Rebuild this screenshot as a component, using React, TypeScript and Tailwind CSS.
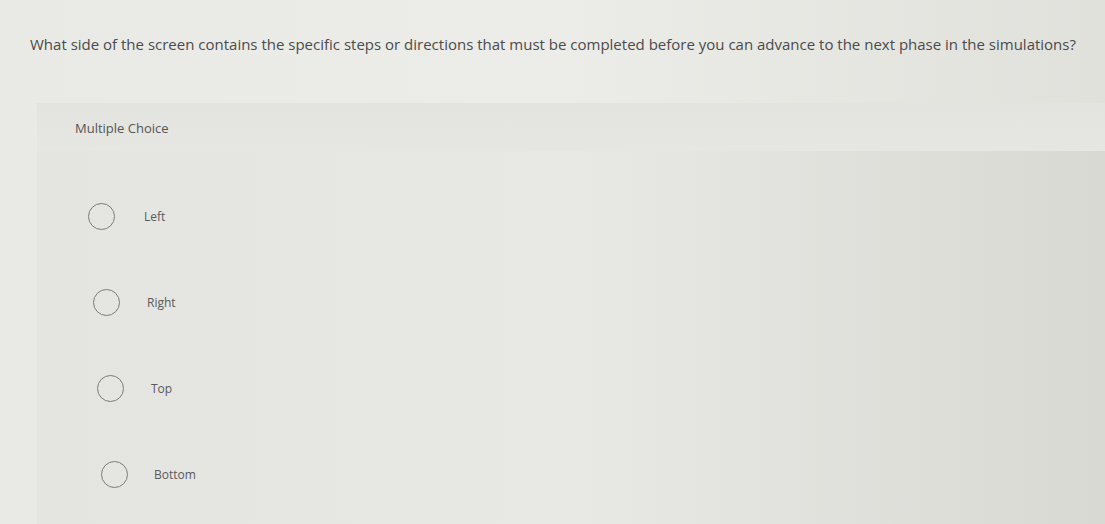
import React from "react";

const options = [
  { label: "Left", ml: "ml-[51px]", gap: "gap-[29px]" },
  { label: "Right", ml: "ml-[56px]", gap: "gap-[27px]" },
  { label: "Top", ml: "ml-[60px]", gap: "gap-[27px]" },
  { label: "Bottom", ml: "ml-[64px]", gap: "gap-[26px]" },
];

export default function App() {
  return (
    <div
      className="w-[1105px] h-[524px] overflow-hidden bg-gradient-to-r from-[#e9eae6] via-[#ecece8] to-[#e1e1dc] text-[#4a4a4a]"
      style={{ fontFamily: "'Open Sans', Lato, sans-serif" }}
    >
      <div className="pl-[30px] pt-[34px] h-[103px]">
        <p className="text-[15px] leading-[20px] text-[#4b4b4b] whitespace-nowrap">
          What side of the screen contains the specific steps or directions that must be completed before you can advance to the next phase in the simulations?
        </p>
      </div>
      <div className="ml-[37px] h-[421px] bg-gradient-to-r from-[#e4e5e1] via-[#e8e9e5] to-[#d9d9d3]">
        <div className="h-[48px] pl-[38px] pt-[12px] bg-gradient-to-b from-[#e3e4e0] to-[#e6e7e3]">
          <span className="text-[13px] leading-[18px] text-[#555555]">Multiple Choice</span>
        </div>
        <div className="flex flex-col pt-[52px] gap-[59px]">
          {options.map((o) => (
            <div key={o.label} className={`flex items-center ${o.ml} ${o.gap} h-[27px]`}>
              <div className="w-[27px] h-[27px] rounded-full border-[1.5px] border-[#7a7a7a] shrink-0" />
              <span className="text-[12px] text-[#595959]">{o.label}</span>
            </div>
          ))}
        </div>
      </div>
    </div>
  );
}
